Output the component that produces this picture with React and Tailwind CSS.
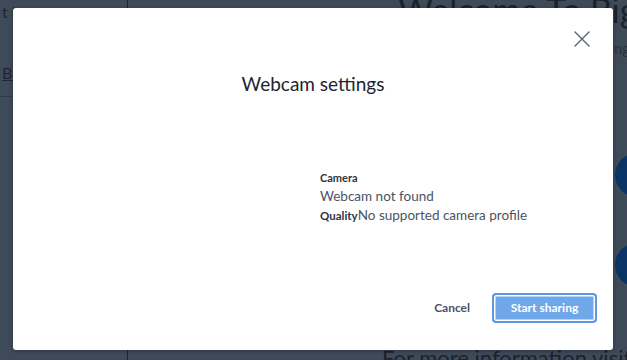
export default function App() {
  return (
    <div className="relative h-[360px] w-[627px] overflow-hidden bg-[#3f4a59] font-['Lato',sans-serif]">
      {/* page behind the dimmed overlay */}
      <div className="flex h-full">
        <aside className="w-[128px] shrink-0 border-r border-[#1d2530]">
          <div className="h-[97px] border-b border-[#323b47] pl-[2px] pt-[3px] text-[16px] text-[#1e2631]">
            <div className="leading-[18px]">t b</div>
            <div className="mt-[42px] leading-[20px] underline">Bu</div>
          </div>
        </aside>
        <main className="flex min-w-0 flex-1 flex-col">
          <div className="-mt-[10px] pl-[270px] whitespace-nowrap text-[34px] leading-[40px] text-[#1a222d]">Welcome To BigBlueButton</div>
          <div className="mt-[8px] pl-[486px] whitespace-nowrap text-[15px] leading-[20px] text-[#2a323e]">ng</div>
          <div className="mt-[95px] flex flex-col items-end gap-[46px]">
            <div className="-mr-[32px] h-[44px] w-[44px] shrink-0 rounded-full bg-[#0b3466]" />
            <div className="-mr-[32px] h-[44px] w-[44px] shrink-0 rounded-full bg-[#0b3466]" />
          </div>
          <div className="mt-auto -mb-[14px] pl-[254px] whitespace-nowrap text-[22px] text-[#1a222d]">
            For more information visit <span className="text-[#0e2f6b]">hi</span>
          </div>
        </main>
      </div>

      {/* modal */}
      <div className="absolute left-[13px] top-[8px] flex h-[342px] w-[600px] flex-col rounded-[3px] bg-white shadow-[0_1px_4px_rgba(0,0,0,0.3)]">
        <div className="flex justify-end pr-[23px] pt-[23px]">
          <button className="h-[16px] w-[16px] text-[#5a6170]">
            <svg viewBox="0 0 16 16" width="16" height="16" fill="none" stroke="currentColor" strokeWidth="1.4" strokeLinecap="round">
              <path d="M1 1L15 15M15 1L1 15" />
            </svg>
          </button>
        </div>
        <h2 className="mt-[25px] text-center text-[19px] leading-[24px] text-[#1e2530]">Webcam settings</h2>

        <div className="mt-[72px] flex">
          <div className="w-[307px] shrink-0" />
          <div className="flex flex-col text-[#4b5263]">
            <label className="text-[11px] font-bold leading-[19px] text-[#2e3542]">Camera</label>
            <span className="text-[13.5px] leading-[19px]">Webcam not found</span>
            <div className="flex items-baseline leading-[19px]">
              <label className="text-[11.5px] font-bold text-[#2e3542]">Quality</label>
              <span className="text-[13.5px]">No supported camera profile</span>
            </div>
          </div>
        </div>

        <div className="mt-auto flex items-center justify-end gap-[22px] pb-[27px] pr-[16px]">
          <button className="text-[12px] font-bold text-[#4b5263]">Cancel</button>
          <button className="h-[30px] w-[105px] rounded-[4px] border-2 border-[#5b98e2] bg-[#6fa7e9] text-[12px] font-bold text-white shadow-[inset_0_0_0_1.5px_#ffffff]">
            Start sharing
          </button>
        </div>
      </div>
    </div>
  );
}
